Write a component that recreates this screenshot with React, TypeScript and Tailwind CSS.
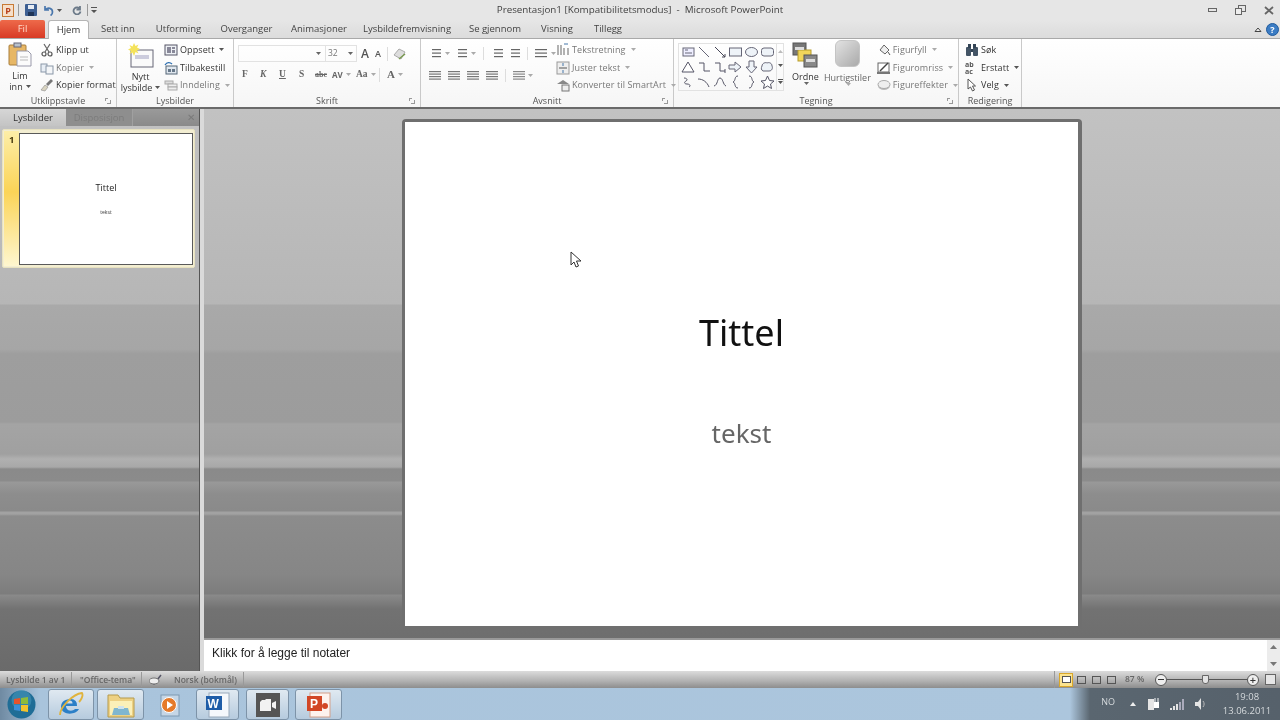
import React from "react";

const F = "font-['Open_Sans','Noto_Sans',sans-serif]";

function Caret({ c = "#777" }: { c?: string }) {
  return (
    <svg width="5" height="3" viewBox="0 0 5 3" className="inline-block ml-[3px] shrink-0">
      <path d="M0 0h5L2.5 3z" fill={c} />
    </svg>
  );
}

function Ico({ w = 14, h = 14, children }: { w?: number; h?: number; children: React.ReactNode }) {
  return (
    <svg width={w} height={h} viewBox={`0 0 ${w} ${h}`} className="shrink-0">
      {children}
    </svg>
  );
}

const Scissors = () => (
  <Ico>
    <path d="M4 1l5 8M10 1L5 9" stroke="#666" strokeWidth="1.2" fill="none" />
    <circle cx="4" cy="11" r="2" fill="none" stroke="#555" strokeWidth="1.2" />
    <circle cx="10" cy="11" r="2" fill="none" stroke="#555" strokeWidth="1.2" />
  </Ico>
);
const CopyI = () => (
  <Ico>
    <rect x="1" y="3" width="6" height="8" fill="#e8eef5" stroke="#8a97a8" />
    <rect x="6" y="5" width="7" height="8" fill="#f4f6f8" stroke="#8a97a8" />
  </Ico>
);
const Brush = () => (
  <Ico>
    <path d="M1 12l4-5 3 2-3 4z" fill="#d9d4c0" stroke="#888" strokeWidth=".6" />
    <path d="M6 6l5-5 2 2-5 5z" fill="#777" />
  </Ico>
);
const Layout1 = () => (
  <Ico>
    <rect x="1" y="2" width="12" height="10" fill="#eef1f5" stroke="#556" />
    <rect x="3" y="4" width="4" height="6" fill="#889" />
    <rect x="8" y="4" width="3" height="2" fill="#889" />
    <rect x="8" y="7" width="3" height="3" fill="#889" />
  </Ico>
);
const Reset = () => (
  <Ico>
    <rect x="2" y="5" width="11" height="8" fill="#dfe6ee" stroke="#567" />
    <rect x="4" y="8" width="3" height="3" fill="#678" />
    <rect x="8" y="8" width="3" height="3" fill="#678" />
    <path d="M1 4c2-3 5-3 7-1" stroke="#2d6fb0" strokeWidth="1.3" fill="none" />
  </Ico>
);
const Section = () => (
  <Ico>
    <rect x="1" y="3" width="8" height="3" fill="#ddd" stroke="#aaa" />
    <rect x="4" y="6" width="9" height="3" fill="#eee" stroke="#aaa" />
    <rect x="4" y="9" width="9" height="3" fill="#eee" stroke="#aaa" />
  </Ico>
);

function Small({ icon, label, caret, dim, w }: { icon: React.ReactNode; label: string; caret?: boolean; dim?: boolean; w?: string }) {
  return (
    <div className={`flex h-[18px] items-center gap-[2px] whitespace-nowrap text-[9px] ${dim ? "text-[#777]" : "text-[#333]"} ${w ?? ""}`}>
      {icon}
      <span className="tracking-[0.1px]">{label}</span>
      {caret && <Caret c={dim ? "#aaa" : "#555"} />}
    </div>
  );
}

function Group({ w, label, launcher, children }: { w: string; label: string; launcher?: boolean; children: React.ReactNode }) {
  return (
    <div className={`${w} shrink-0 flex flex-col border-r border-[#c9c9c9]`}>
      <div className="h-[55px] flex">{children}</div>
      <div className="relative h-[13px] flex items-center justify-center text-[9px] text-[#555] leading-none">
        {label}
        {launcher && (
          <svg width="6" height="6" viewBox="0 0 6 6" className="absolute right-[5px] top-[4px]">
            <path d="M0 .5h3M.5 0v3M5.5 2v4M2 5.5h4" stroke="#999" fill="none" />
          </svg>
        )}
      </div>
    </div>
  );
}

const tabs = [
  ["Sett inn", "w-[58px]"],
  ["Utforming", "w-[63px]"],
  ["Overganger", "w-[73px]"],
  ["Animasjoner", "w-[72px]"],
  ["Lysbildefremvisning", "w-[104px]"],
  ["Se gjennom", "w-[72px]"],
  ["Visning", "w-[52px]"],
  ["Tillegg", "w-[50px]"],
];

function TitleBar() {
  return (
    <div className="relative h-[20px] flex items-center pl-[2px] bg-[#e6e6e6]">
      <div className="w-[12px] h-[13px] border border-[#c87a35] bg-[#f6dfc9] text-[#b8401d] text-[9px] font-bold leading-[11px] text-center">P</div>
      <div className="w-px h-[12px] bg-[#999] ml-[4px]" />
      <svg width="12" height="12" viewBox="0 0 12 12" className="ml-[6px]">
        <rect width="12" height="12" rx="1" fill="#3d5f92" />
        <rect x="3" y="1" width="6" height="4" fill="#e6ebf2" />
        <rect x="3" y="8" width="6" height="4" fill="#1f3558" />
      </svg>
      <svg width="11" height="11" viewBox="0 0 11 11" className="ml-[6px]">
        <path d="M2 1v4h4M2.5 4.5C5 2 9.5 3 9.5 7c0 1.500-1 3-2 3.500" stroke="#4a77ad" strokeWidth="1.700" fill="none" />
      </svg>
      <Caret c="#555" />
      <svg width="10" height="10" viewBox="0 0 10 10" className="ml-[10px]">
        <path d="M8 1v3.500H4.500M8 4A3.500 3.500 0 1 0 8.500 6.500" stroke="#6c7a89" strokeWidth="1.800" fill="none" />
      </svg>
      <div className="w-px h-[12px] bg-[#999] ml-[5px]" />
      <svg width="6" height="6" viewBox="0 0 6 6" className="ml-[3px]">
        <path d="M0 0h6v1H0zM0 3h6L3 6z" fill="#555" />
      </svg>
      <div className="absolute inset-x-0 top-[3px] text-center text-[#3f3f3f] text-[9.8px] leading-[13px] whitespace-pre">
        Presentasjon1 [Kompatibilitetsmodus]  -  Microsoft PowerPoint
      </div>
      <div className="ml-auto flex items-center gap-[18px] pr-[6px]">
        <div className="w-[9px] h-[4px] border border-[#666]" />
        <svg width="11" height="10" viewBox="0 0 11 10">
          <rect x="3.500" y=".5" width="7" height="6" fill="none" stroke="#666" />
          <rect x=".5" y="3.500" width="6" height="6" fill="#eee" stroke="#666" />
        </svg>
        <svg width="10" height="9" viewBox="0 0 10 9">
          <path d="M1 1l8 7M9 1L1 8" stroke="#666" strokeWidth="1.800" />
        </svg>
      </div>
    </div>
  );
}

function TabRow() {
  return (
    <div className="relative h-[18px] flex items-end bg-[linear-gradient(#e6e6e6,#dcdcdc)] border-b border-[#a9a9a9] box-content">
      <div className="w-[45px] h-[18px] rounded-t-[2px] bg-[linear-gradient(#ee6a4a,#d83a25)] text-[#ffd9c9] text-[9.5px] leading-[18px] text-center">Fil</div>
      <div className="ml-[3px] w-[41px] h-[19px] -mb-px rounded-t-[3px] border border-b-0 border-[#b5b5b5] bg-white text-[#333] text-[9.5px] leading-[18px] text-center">Hjem</div>
      {tabs.map(([t, w]) => (
        <div key={t} className={`${w} h-[18px] text-[9.5px] leading-[18px] text-center text-[#444] font-medium whitespace-nowrap`}>
          {t}
        </div>
      ))}
      <div className="ml-auto flex items-center gap-[4px] pr-[1px] h-[18px]">
        <svg width="8" height="5" viewBox="0 0 8 5">
          <path d="M1 4.500L4 1l3 3.500z" fill="#eee" stroke="#444" />
        </svg>
        <div className="w-[13px] h-[13px] rounded-full bg-[#3b7cc4] border border-[#1f5a9c] text-white text-[9px] font-bold leading-[11px] text-center">?</div>
      </div>
    </div>
  );
}

function Clipboard() {
  return (
    <Group w="w-[117px]" label="Utklippstavle" launcher>
      <div className="w-[40px] flex flex-col items-center pt-[3px] text-[9px] text-[#333] leading-[11px]">
        <svg width="24" height="25" viewBox="0 0 24 25">
          <rect x="1" y="3" width="17" height="20" rx="1" fill="#e7b765" stroke="#a97f3d" />
          <rect x="6" y="1" width="7" height="4" fill="#b9c2cc" stroke="#667" />
          <path d="M9 9h11l3 3v12H9z" fill="#fbfbfb" stroke="#99a" />
          <path d="M12 15h8M12 18h8" stroke="#bbb" />
        </svg>
        <div className="mt-[3px] text-center">Lim</div>
        <div className="flex items-center">inn<Caret c="#555" /></div>
      </div>
      <div className="flex flex-col pt-[2px]">
        <Small icon={<Scissors />} label="Klipp ut" />
        <Small icon={<CopyI />} label="Kopier" caret dim />
        <Small icon={<Brush />} label="Kopier format" />
      </div>
    </Group>
  );
}

function Slides() {
  return (
    <Group w="w-[117px]" label="Lysbilder">
      <div className="w-[47px] flex flex-col items-center pt-[4px] text-[9px] text-[#333] leading-[11px]">
        <svg width="26" height="25" viewBox="0 0 26 25">
          <rect x="3" y="7" width="22" height="17" fill="#fafafa" stroke="#667" />
          <rect x="7" y="12" width="14" height="4" fill="#ccd" />
          <path d="M6 0l1.500 3 3-1.500-1.500 3 3 1.500-3 1.500 1.500 3-3-1.500L6 13 4.500 9.500l-3 1.500 1.500-3L0 6.500 3 5 1.500 2l3 1.500z" fill="#f4e25a" />
        </svg>
        <div className="mt-[3px] text-center">Nytt</div>
        <div className="flex items-center whitespace-nowrap">lysbilde<Caret c="#555" /></div>
      </div>
      <div className="flex flex-col pt-[2px]">
        <Small icon={<Layout1 />} label="Oppsett" caret />
        <Small icon={<Reset />} label="Tilbakestill" />
        <Small icon={<Section />} label="Inndeling" caret dim />
      </div>
    </Group>
  );
}

function Font() {
  return (
    <Group w="w-[187px]" label="Skrift" launcher>
      <div className="flex flex-col pl-[4px] pt-[6px] w-full">
        <div className="flex items-center h-[17px]">
          <div className="w-[88px] h-[17px] border border-[#e2e2e2] flex items-center justify-end pr-[4px]"><Caret c="#666" /></div>
          <div className="w-[31px] h-[17px] border border-l-0 border-[#e2e2e2] flex items-center justify-between pl-[2px] pr-[3px] text-[8.500px] text-[#777]">32<Caret c="#666" /></div>
          <span className="ml-[4px] text-[#555] text-[12px] leading-none font-semibold">A</span>
          <span className="ml-[6px] text-[#555] text-[9px] leading-none font-semibold">A</span>
          <div className="w-px h-[14px] bg-[#ddd] ml-[6px]" />
          <svg width="14" height="14" viewBox="0 0 14 14" className="ml-[5px]">
            <path d="M1 8l5-6 6 3-4 7z" fill="#ddd" stroke="#aaa" />
            <path d="M6 12l6-5" stroke="#7a9a50" strokeWidth="1.500" />
          </svg>
        </div>
        <div className="flex items-center h-[17px] mt-[4px] pl-[4px] text-[#666] text-[9.500px] font-bold font-['Liberation_Serif',serif]">
          <span className="w-[18px]">F</span>
          <span className="w-[19px] italic">K</span>
          <span className="w-[20px] underline">U</span>
          <span className="w-[16px]">S</span>
          <span className="w-[17px] text-[8px] line-through">abc</span>
          <span className="w-[24px] text-[8px] flex items-center font-['Open_Sans',sans-serif]">AV<Caret c="#aaa" /></span>
          <span className="w-[23px] flex items-center">Aa<Caret c="#aaa" /></span>
          <div className="w-px h-[14px] bg-[#ddd]" />
          <span className="ml-[7px] text-[11px] flex items-center">A<Caret c="#aaa" /></span>
        </div>
      </div>
    </Group>
  );
}

function Lines({ n = 3, w = 12, c = "#666", indent }: { n?: number; w?: number; c?: string; indent?: boolean }) {
  return (
    <svg width={w} height="11" viewBox={`0 0 ${w} 11`} className="shrink-0">
      {Array.from({ length: n }).map((_, i) => (
        <rect key={i} x={indent ? 3 : 0} y={1 + i * (n === 3 ? 3.500 : 2.500)} width={indent ? w - 3 : w} height="1.200" fill={c} />
      ))}
    </svg>
  );
}

function Paragraph() {
  return (
    <Group w="w-[253px]" label="Avsnitt" launcher>
      <div className="w-[135px] flex flex-col pl-[8px] pt-[7px]">
        <div className="flex items-center h-[15px] gap-[1px]">
          <Lines indent /><Caret c="#aaa" />
          <span className="w-[6px]" />
          <Lines indent /><Caret c="#aaa" />
          <div className="w-px h-[13px] bg-[#ddd] mx-[6px]" />
          <Lines indent />
          <span className="w-[6px]" />
          <Lines indent />
          <div className="w-px h-[13px] bg-[#ddd] mx-[6px]" />
          <Lines /><Caret c="#aaa" />
        </div>
        <div className="flex items-center h-[15px] mt-[7px] gap-[7px]">
          <Lines n={4} c="#777" />
          <Lines n={4} c="#777" />
          <Lines n={4} c="#777" />
          <Lines n={4} c="#777" />
          <div className="w-px h-[13px] bg-[#ddd]" />
          <span className="flex items-center"><Lines n={4} c="#888" /><Caret c="#aaa" /></span>
        </div>
      </div>
      <div className="flex flex-col pt-[2px]">
        <Small icon={<svg width="14" height="14" viewBox="0 0 14 14"><path d="M2 2v10M5 2v10M8 5v7M12 5v7" stroke="#666" /><path d="M8 1h4" stroke="#47a" /></svg>} label="Tekstretning" caret dim />
        <Small icon={<svg width="14" height="14" viewBox="0 0 14 14"><rect x="1" y="1" width="12" height="12" fill="#eee" stroke="#999" /><path d="M3 7h8" stroke="#555" /><path d="M7 2v3M7 12V9" stroke="#47a" /></svg>} label="Juster tekst" caret dim />
        <Small icon={<svg width="14" height="14" viewBox="0 0 14 14"><path d="M1 6l6-4 6 4z" fill="#888" /><rect x="6" y="7" width="7" height="6" fill="#eee" stroke="#777" /></svg>} label="Konverter til SmartArt" caret dim />
      </div>
    </Group>
  );
}

const shapes: React.ReactNode[] = [
  <g><rect x="2" y="3" width="11" height="8" fill="#eef" stroke="#667" /><path d="M4 5h3M4 8h7" stroke="#667" /></g>,
  <path d="M2 2l10 10" stroke="#667" fill="none" />,
  <path d="M2 2l10 10M12 12v-3M12 12H9" stroke="#445" fill="none" />,
  <rect x="1.500" y="3" width="12" height="8" fill="#eef3f8" stroke="#667" />,
  <ellipse cx="7.500" cy="7" rx="6" ry="4.500" fill="#eef3f8" stroke="#667" />,
  <rect x="1.500" y="3" width="12" height="8" rx="2.500" fill="#eef3f8" stroke="#667" />,
  <path d="M7 2l6 10H1z" fill="#fff" stroke="#556" />,
  <path d="M2 3h5v8h6" stroke="#556" fill="none" />,
  <path d="M2 3h5v8h5M12 9v4" stroke="#556" fill="none" />,
  <path d="M1 5h6V2l6 5-6 5V9H1z" fill="#eef3f8" stroke="#667" />,
  <path d="M5 1h5v6h3l-5.500 6L2 7h3z" fill="#eef3f8" stroke="#667" />,
  <path d="M2 6c0-3 4-4 5-3 2-1 5 0 5 3 1 2 0 5-3 5H3c-2-1-2-3-1-5z" fill="#eef3f8" stroke="#667" />,
  <path d="M3 3c3 0 4 2 2 3s-2 3 1 3 4 2 2 3" stroke="#556" fill="none" />,
  <path d="M1 4c5 0 9 3 11 8" stroke="#556" fill="none" />,
  <path d="M1 11c4-1 3-8 6-8s3 7 6 8" stroke="#556" fill="none" />,
  <path d="M10 1C6 1 8 6 5 7c3 1 1 6 5 6" stroke="#556" fill="none" />,
  <path d="M5 1c4 0 2 5 5 6-3 1-1 6-5 6" stroke="#556" fill="none" />,
  <path d="M7.500 1l2 4.500 4.500.500-3.500 3 1 4.500-4-2.500-4 2.500 1-4.500L1 6l4.500-.500z" fill="#fff" stroke="#556" />,
];

function Drawing() {
  return (
    <Group w="w-[285px]" label="Tegning" launcher>
      <div className="mt-[4px] ml-[4px] h-[48px] w-[112px] flex border border-[#e2e2e2]">
        <div className="w-[97px] grid grid-cols-6 pl-[2px]">
          {shapes.map((s, i) => (
            <svg key={i} width="15" height="14" viewBox="0 0 15 14" className="self-center">{s}</svg>
          ))}
        </div>
        <div className="flex-1 flex flex-col border-l border-[#e2e2e2] items-center justify-around">
          <svg width="5" height="3"><path d="M0 3h5L2.500 0z" fill="#bbb" /></svg>
          <svg width="5" height="3"><path d="M0 0h5L2.500 3z" fill="#555" /></svg>
          <svg width="5" height="5"><path d="M0 0h5v1H0zM0 2h5L2.500 5z" fill="#555" /></svg>
        </div>
      </div>
      <div className="w-[39px] ml-[3px] flex flex-col items-center pt-[3px] text-[9px] leading-[11px] text-[#333]">
        <svg width="26" height="26" viewBox="0 0 26 26">
          <rect x="1" y="1" width="13" height="12" fill="#777" stroke="#555" />
          <rect x="6" y="8" width="13" height="11" fill="#f1d65a" stroke="#b69b2c" />
          <rect x="12" y="13" width="13" height="12" fill="#888" stroke="#555" />
          <rect x="3" y="5" width="9" height="3" fill="#ddd" />
          <rect x="14" y="17" width="9" height="3" fill="#ddd" />
        </svg>
        <div className="mt-[3px]">Ordne</div>
        <Caret c="#666" />
      </div>
      <div className="w-[48px] flex flex-col items-center pt-[1px] text-[9px] leading-[11px] text-[#666]">
        <div className="w-[25px] h-[27px] rounded-[6px] bg-[linear-gradient(135deg,#e2e2e2,#aaa)] border border-[#c4c4c4]" />
        <div className="mt-[5px] whitespace-nowrap">Hurtigstiler</div>
        <Caret c="#aaa" />
      </div>
      <div className="flex flex-col pt-[2px] pl-[6px]">
        <Small icon={<svg width="14" height="14" viewBox="0 0 14 14"><path d="M3 7l4-5 5 5-4 4z" fill="#eee" stroke="#666" /><path d="M11 9l2 3" stroke="#555" /></svg>} label="Figurfyll" caret dim />
        <Small icon={<svg width="14" height="14" viewBox="0 0 14 14"><rect x="1" y="2" width="11" height="9" fill="#fff" stroke="#666" /><path d="M3 10l8-8" stroke="#444" strokeWidth="1.500" /><rect y="11" width="13" height="2" fill="#777" /></svg>} label="Figuromriss" caret dim />
        <Small icon={<svg width="14" height="14" viewBox="0 0 14 14"><ellipse cx="7" cy="8" rx="6" ry="4" fill="#bbb" /><ellipse cx="7" cy="6.500" rx="6" ry="4" fill="#eee" stroke="#aaa" /></svg>} label="Figureffekter" caret dim />
      </div>
    </Group>
  );
}

function Editing() {
  return (
    <Group w="w-[63px]" label="Redigering">
      <div className="flex flex-col pt-[2px] pl-[6px]">
        <Small icon={<svg width="14" height="14" viewBox="0 0 14 14"><rect x="1" y="4" width="5" height="9" rx="1" fill="#456" /><rect x="8" y="4" width="5" height="9" rx="1" fill="#456" /><rect x="3" y="1" width="3" height="4" fill="#345" /><rect x="8" y="1" width="3" height="4" fill="#345" /><rect x="6" y="6" width="2" height="3" fill="#345" /></svg>} label="Søk" />
        <Small icon={<span className="w-[14px] text-[7px] leading-[7px] font-bold text-[#555]">ab<br />ac</span>} label="Erstatt" caret />
        <Small icon={<svg width="14" height="14" viewBox="0 0 14 14"><path d="M3 1v10l2.500-2 2 4 2-1-2-4h3z" fill="#fff" stroke="#555" /></svg>} label="Velg" caret />
      </div>
    </Group>
  );
}

function Ribbon() {
  return (
    <div className="h-[68px] flex bg-[linear-gradient(#ffffff,#f6f6f6)] border-b-2 border-[#6a6a6a] box-content">
      <Clipboard />
      <Slides />
      <Font />
      <Paragraph />
      <Drawing />
      <Editing />
    </div>
  );
}

function LeftPane() {
  return (
    <div className="w-[199px] shrink-0 flex flex-col">
      <div className="h-[17px] flex text-[9.500px] leading-[17px] bg-[linear-gradient(#9a9a9a,#8a8a8a)]">
        <div className="w-[66px] text-center text-[#333] font-medium bg-[linear-gradient(#d6d6d6,#c4c4c4)]">Lysbilder</div>
        <div className="w-[67px] text-center text-[#7c7c7c] bg-[#8e8e8e] border-r border-[#a0a0a0]">Disposisjon</div>
        <div className="ml-auto pr-[4px] text-[#7a7a7a]">✕</div>
      </div>
      <div className="ml-[2px] mt-[3px] w-[193px] h-[139px] flex rounded-[2px] border border-[#e8e2c0] bg-[#f3eed2] p-[1px]">
        <div className="w-[15px] h-full pl-[5px] text-[9.500px] leading-[18px] font-bold text-[#4a3c10] bg-[linear-gradient(#fdeea8,#fbd457_45%,#fef6cf)]">1</div>
        <div className="w-[175px] h-[132px] mt-[2px] bg-white border border-[#5a5a5a] flex flex-col items-center">
          <div className="mt-[48px] text-[9px] leading-[12px] text-[#222] font-medium">Tittel</div>
          <div className="mt-[14px] text-[5px] leading-[8px] text-[#333]">tekst</div>
        </div>
      </div>
    </div>
  );
}

function Notes() {
  return (
    <div className="h-[33px] flex border-t-2 border-[#9a9a9a] bg-white mt-auto">
      <div className="flex-1 pl-[8px] pt-[3px] text-[12px] leading-[20px] text-[#222] font-['Liberation_Sans',sans-serif]">Klikk for å legge til notater</div>
      <div className="w-[13px] flex flex-col items-center justify-between py-[5px] bg-[#ececec]">
        <svg width="7" height="4"><path d="M0 4h7L3.500 0z" fill="#777" /></svg>
        <svg width="7" height="4"><path d="M0 0h7L3.500 4z" fill="#777" /></svg>
      </div>
    </div>
  );
}

function Editor() {
  return (
    <div className="flex-1 flex flex-col min-w-0">
      <div className="relative ml-[198px] mt-[10px] w-[680px] h-[510px] rounded-t-[4px] bg-[#6f6f6f] pt-[3px] pl-[3px]">
        <div className="w-[673px] h-[504px] bg-white flex flex-col items-center">
          <div className="mt-[188px] text-[36px] leading-[46px] text-[#111] font-['Noto_Sans',sans-serif]">Tittel</div>
          <div className="mt-[60px] text-[26px] leading-[34px] text-[#666] font-['Noto_Sans',sans-serif]">tekst</div>
        </div>
        <svg width="12" height="18" viewBox="0 0 12 18" className="absolute left-[168px] top-[132px]">
          <path d="M1 1v13l3-3 2 5 2.500-1-2-5H11z" fill="#fff" stroke="#333" />
        </svg>
      </div>
      <Notes />
    </div>
  );
}

function StatusBar() {
  return (
    <div className="h-[17px] flex items-center text-[8.500px] font-semibold text-[#666] bg-[linear-gradient(#dcdcdc,#b0b0b0_60%,#8d8d8d)]">
      <div className="w-[72px] pl-[6px] border-r border-[#999] leading-[15px] whitespace-nowrap">Lysbilde 1 av 1</div>
      <div className="w-[70px] pl-[8px] border-r border-[#999] leading-[15px] whitespace-nowrap">"Office-tema"</div>
      <div className="w-[102px] flex items-center pl-[7px] gap-[12px] border-r border-[#999] leading-[15px] whitespace-nowrap">
        <svg width="13" height="11" viewBox="0 0 13 11"><path d="M1 7l4 3 7-9" stroke="#556" strokeWidth="1.500" fill="none" /><ellipse cx="5" cy="7" rx="5" ry="3" fill="#eee" stroke="#777" /></svg>
        <span>Norsk (bokmål)</span>
      </div>
      <div className="ml-auto flex items-center h-full border-l border-[#999] pl-[4px]">
        <div className="w-[14px] h-[14px] border border-[#d9a72a] bg-[#fbe38f] flex items-center justify-center">
          <div className="w-[9px] h-[7px] border border-[#555] bg-white" />
        </div>
        {[1081, 1096, 1111].map((k) => (
          <div key={k} className="ml-[2px] w-[13px] flex justify-center">
            <div className="w-[9px] h-[8px] border border-[#555]" />
          </div>
        ))}
        <span className="ml-[7px] w-[27px]">87 %</span>
        <div className="ml-[3px] w-[12px] h-[12px] rounded-full border border-[#555] bg-[#eee] flex items-center justify-center"><div className="w-[6px] h-px bg-[#333]" /></div>
        <div className="relative w-[80px] h-px bg-[#555]">
          <div className="absolute left-[35px] -top-[4px] w-[7px] h-[9px] rounded-b-[3px] bg-[#e4e4e4] border border-[#666]" />
        </div>
        <div className="w-[12px] h-[12px] rounded-full border border-[#555] bg-[#eee] text-[#333] text-[11px] leading-[10px] text-center">+</div>
        <div className="ml-[6px] mr-[4px] w-[11px] h-[11px] border border-[#666] bg-[#e6e6e6]" />
      </div>
    </div>
  );
}

function TaskBtn({ w, children, plain, ml }: { w: string; children: React.ReactNode; plain?: boolean; ml: string }) {
  return (
    <div className={`${w} ${ml} h-[31px] mt-[1px] flex items-center justify-center rounded-[3px] ${plain ? "" : "border border-[#7d93a8] bg-[linear-gradient(#e0e9f1,#b6cbde)]"}`}>
      {children}
    </div>
  );
}

function Taskbar() {
  return (
    <div className="h-[32px] flex bg-[linear-gradient(90deg,#6f8aa2_0px,#a9c4dc_40px,#acc6dd_1070px,#5a6670_1090px,#56616b_100%)]">
      <div className="w-[48px] flex items-center pl-[7px]">
        <svg width="29" height="29" viewBox="0 0 29 29">
          <circle cx="14.500" cy="14.500" r="14" fill="#1f6d96" />
          <circle cx="14.500" cy="10" r="10" fill="#4e9dc0" opacity=".5" />
          <path d="M7 9l6-1v6H7z" fill="#e5532c" />
          <path d="M14 8l7-1v7h-7z" fill="#8dbb3c" />
          <path d="M7 15h6v6l-6-1z" fill="#3a8fd8" />
          <path d="M14 15h7v7l-7-1z" fill="#f3c32c" />
        </svg>
      </div>
      <TaskBtn w="w-[46px]" ml="ml-0">
        <svg width="28" height="28" viewBox="0 0 28 28">
          <path d="M14 8a6 6 0 0 1 6 7H9c0 5 6 6 9 3h4c-3 6-17 7-18-2 0-6 5-8 10-8zM9.500 12.500h6A3 3 0 0 0 9.500 12.500z" fill="#2b7fc7" />
          <path d="M3 24C3 16 16 3 25 2c2 3-2 8-3 9" stroke="#e0b33c" strokeWidth="1.800" fill="none" />
        </svg>
      </TaskBtn>
      <TaskBtn w="w-[47px]" ml="ml-[3px]">
        <svg width="28" height="26" viewBox="0 0 28 26">
          <path d="M1 3h10l2 3h14v19H1z" fill="#edd184" stroke="#b59a4c" />
          <rect x="3" y="9" width="22" height="14" fill="#fbf0b8" />
          <path d="M7 16h14l2 7H5z" fill="#7fb6cf" />
          <rect x="11" y="14" width="6" height="3" fill="#cfe3ed" />
        </svg>
      </TaskBtn>
      <TaskBtn w="w-[40px]" ml="ml-[6px]" plain>
        <svg width="26" height="26" viewBox="0 0 26 26">
          <rect x="4" y="3" width="18" height="21" fill="#c5d6e6" stroke="#7e9ab2" />
          <circle cx="12" cy="13" r="7.500" fill="#e57a2a" stroke="#fff" />
          <path d="M10 9l6 4-6 4z" fill="#fff" />
        </svg>
      </TaskBtn>
      <TaskBtn w="w-[43px]" ml="ml-[6px]">
        <svg width="26" height="26" viewBox="0 0 26 26">
          <rect x="4" y="1" width="20" height="24" fill="#f5f8fc" stroke="#9ab" />
          <rect x="1" y="4" width="16" height="14" fill="#1f5da8" />
          <text x="2.500" y="15.500" fontSize="12" fontWeight="700" fill="#fff" fontFamily="Liberation Sans">W</text>
        </svg>
      </TaskBtn>
      <TaskBtn w="w-[43px]" ml="ml-[7px]">
        <svg width="26" height="26" viewBox="0 0 26 26">
          <rect x="1" y="1" width="24" height="24" fill="#555" />
          <path d="M5 10l2-2h3l1-1h5v12H5z" fill="#f2f2f2" />
          <path d="M17 11l4-2v8l-4-2z" fill="#f2f2f2" />
        </svg>
      </TaskBtn>
      <TaskBtn w="w-[47px]" ml="ml-[6px]">
        <svg width="26" height="26" viewBox="0 0 26 26">
          <rect x="4" y="1" width="20" height="24" fill="#fdf3ee" stroke="#d3a08a" />
          <rect x="1" y="4" width="15" height="15" fill="#d24726" />
          <text x="4" y="16" fontSize="12" fontWeight="700" fill="#fff" fontFamily="Liberation Sans">P</text>
          <circle cx="19" cy="14" r="3" fill="#d24726" />
        </svg>
      </TaskBtn>
      <div className="ml-auto flex items-center text-[#d5d9dc] pr-[8px]">
        <span className="text-[9px] leading-none -mt-[5px]">NO</span>
        <svg width="6" height="4" className="ml-[15px]"><path d="M0 4h6L3 0z" fill="#eee" /></svg>
        <svg width="12" height="14" viewBox="0 0 12 14" className="ml-[12px]">
          <rect x="0" y="2" width="6" height="11" fill="#e5e5e5" />
          <rect x="6" y="5" width="5" height="6" fill="#fff" />
          <path d="M7 1v4M10 1v4" stroke="#fff" />
        </svg>
        <svg width="14" height="11" viewBox="0 0 14 11" className="ml-[10px]">
          <rect x="0" y="9" width="2" height="2" fill="#e5e5e5" />
          <rect x="3" y="7" width="2" height="4" fill="#e5e5e5" />
          <rect x="6" y="5" width="2" height="6" fill="#e5e5e5" />
          <rect x="9" y="3" width="2" height="8" fill="#aab" />
          <rect x="12" y="0" width="2" height="11" fill="#aab" />
        </svg>
        <svg width="11" height="12" viewBox="0 0 11 12" className="ml-[11px]">
          <path d="M0 4h3l3-4v12L3 8H0z" fill="#e5e5e5" />
          <path d="M8 3c1.500 2 1.500 4 0 6" stroke="#bbb" fill="none" />
        </svg>
        <div className="ml-[16px] w-[50px] text-center text-[9.500px] leading-[14px]">
          <div>19:08</div>
          <div className="whitespace-nowrap">13.06.2011</div>
        </div>
      </div>
    </div>
  );
}

const bands =
  "bg-[linear-gradient(180deg,#c2c2c2_0px,#b6b6b6_195px,#a9a9a9_196px,#a6a6a6_240px,#9e9e9e_245px,#9c9c9c_313px,#a4a4a4_315px,#a0a0a0_345px,#b0b0b0_350px,#a8a8a8_358px,#8a8a8a_360px,#8b8b8b_372px,#999999_373px,#8d8d8d_385px,#8a8a8a_402px,#a2a2a2_403px,#a2a2a2_405px,#8c8c8c_407px,#868686_465px,#7c7c7c_485px,#8a8a8a_486px,#727272_500px,#6a6a6a_563px)]";

export default function App() {
  return (
    <div className={`w-[1280px] h-[720px] overflow-hidden flex flex-col blur-[0.35px] bg-[#6a6a6a] ${F}`}>
      <TitleBar />
      <TabRow />
      <Ribbon />
      <div className={`h-[562px] flex ${bands}`}>
        <LeftPane />
        <div className="w-[5px] shrink-0 border-l border-[#555] bg-[#dadada]" />
        <Editor />
      </div>
      <StatusBar />
      <Taskbar />
    </div>
  );
}
